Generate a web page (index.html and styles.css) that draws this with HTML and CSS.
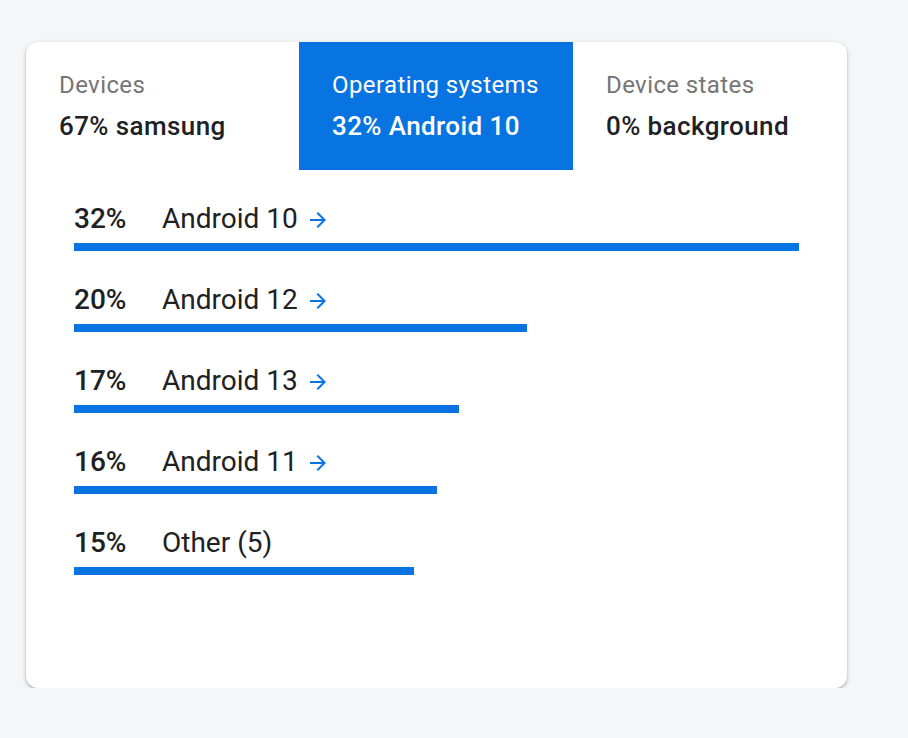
FILE: index.html
```html
<!DOCTYPE html>
<html>
<head>
<meta charset="utf-8">
<link rel="stylesheet" href="styles.css">
</head>
<body>
<div class="card">
  <div class="tabs">
    <div class="tab">
      <div class="tab-label">Devices</div>
      <div class="tab-value">67% samsung</div>
    </div>
    <div class="tab active">
      <div class="tab-label">Operating systems</div>
      <div class="tab-value">32% Android 10</div>
    </div>
    <div class="tab">
      <div class="tab-label">Device states</div>
      <div class="tab-value">0% background</div>
    </div>
  </div>
  <div class="list">
    <div class="row">
      <div class="row-head"><span class="pct">32%</span><span class="name">Android 10</span><svg class="arrow" viewBox="0 0 24 24"><path d="M12 4l-1.41 1.41L16.17 11H4v2h12.17l-5.58 5.59L12 20l8-8z"/></svg></div>
      <div class="bar" style="width:100%"></div>
    </div>
    <div class="row">
      <div class="row-head"><span class="pct">20%</span><span class="name">Android 12</span><svg class="arrow" viewBox="0 0 24 24"><path d="M12 4l-1.41 1.41L16.17 11H4v2h12.17l-5.58 5.59L12 20l8-8z"/></svg></div>
      <div class="bar" style="width:62.5%"></div>
    </div>
    <div class="row">
      <div class="row-head"><span class="pct">17%</span><span class="name">Android 13</span><svg class="arrow" viewBox="0 0 24 24"><path d="M12 4l-1.41 1.41L16.17 11H4v2h12.17l-5.58 5.59L12 20l8-8z"/></svg></div>
      <div class="bar" style="width:53.1%"></div>
    </div>
    <div class="row">
      <div class="row-head"><span class="pct">16%</span><span class="name">Android 11</span><svg class="arrow" viewBox="0 0 24 24"><path d="M12 4l-1.41 1.41L16.17 11H4v2h12.17l-5.58 5.59L12 20l8-8z"/></svg></div>
      <div class="bar" style="width:50%"></div>
    </div>
    <div class="row">
      <div class="row-head"><span class="pct">15%</span><span class="name">Other (5)</span></div>
      <div class="bar" style="width:46.9%"></div>
    </div>
  </div>
</div>
</body>
</html>
```
FILE: styles.css
```css
html, body {
  margin: 0;
  padding: 0;
  background: #f5f6f8;
  font-family: Roboto, "Liberation Sans", Arial, sans-serif;
}
body {
  padding: 42px 0 0 26px;
}
.card {
  width: 821px;
  height: 646px;
  background: #fff;
  border-radius: 12px;
  box-shadow: 0 1px 2px rgba(60,64,67,.3), 0 2px 4px 1px rgba(60,64,67,.15);
  overflow: hidden;
  box-sizing: border-box;
}
.tabs {
  display: grid;
  grid-template-columns: 273px 274px 274px;
  height: 128px;
}
.tab {
  padding: 28px 0 0 33px;
  box-sizing: border-box;
}
.tab-label {
  font-size: 24px;
  line-height: 30px;
  color: #757575;
  letter-spacing: 0.4px;
}
.tab-value {
  margin-top: 10px;
  font-size: 26px;
  line-height: 32px;
  font-weight: 500;
  color: #202124;
  letter-spacing: 0.4px;
}
.tab.active {
  background: #0774e2;
}
.tab.active .tab-label,
.tab.active .tab-value {
  color: #fff;
}
.list {
  padding: 32px 48px 0 48px;
}
.row {
  margin-bottom: 32px;
}
.row-head {
  display: flex;
  align-items: center;
  height: 32px;
  margin-bottom: 9px;
  font-size: 28px;
  color: #202124;
}
.pct {
  width: 88px;
  font-weight: 500;
}
.name {
  font-weight: 400;
}
.arrow {
  width: 24px;
  height: 24px;
  margin-left: 8px;
  margin-top: 3px;
  fill: #0774e2;
}
.bar {
  height: 8px;
  background: #0774e2;
}
```
